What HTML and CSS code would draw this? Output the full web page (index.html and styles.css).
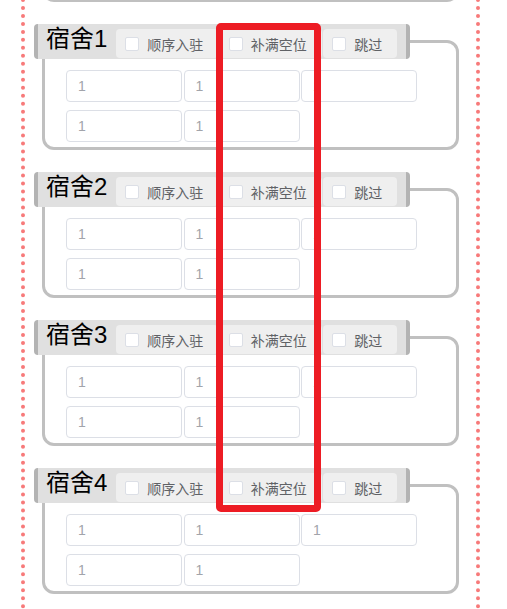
FILE: index.html
```html
<!DOCTYPE html>
<html lang="zh-CN">
<head>
<meta charset="utf-8">
<title>宿舍</title>
<link rel="stylesheet" href="styles.css">
</head>
<body>
<div class="page">
  <div class="prev-tail"></div>

  <fieldset class="room">
    <legend class="room-head">
      <div class="head-row">
        <span class="room-name">宿舍1</span>
        <label class="opt"><input type="checkbox" class="chk"><span>顺序入驻</span></label>
        <label class="opt"><input type="checkbox" class="chk"><span>补满空位</span></label>
        <label class="opt"><input type="checkbox" class="chk"><span>跳过</span></label>
      </div>
    </legend>
    <div class="cells">
      <input class="cell" type="text" value="1">
      <input class="cell" type="text" value="1">
      <input class="cell" type="text" value="1">
      <input class="cell" type="text" value="1">
      <input class="cell" type="text" value="1">
    </div>
  </fieldset>

  <fieldset class="room">
    <legend class="room-head">
      <div class="head-row">
        <span class="room-name">宿舍2</span>
        <label class="opt"><input type="checkbox" class="chk"><span>顺序入驻</span></label>
        <label class="opt"><input type="checkbox" class="chk"><span>补满空位</span></label>
        <label class="opt"><input type="checkbox" class="chk"><span>跳过</span></label>
      </div>
    </legend>
    <div class="cells">
      <input class="cell" type="text" value="1">
      <input class="cell" type="text" value="1">
      <input class="cell" type="text" value="1">
      <input class="cell" type="text" value="1">
      <input class="cell" type="text" value="1">
    </div>
  </fieldset>

  <fieldset class="room">
    <legend class="room-head">
      <div class="head-row">
        <span class="room-name">宿舍3</span>
        <label class="opt"><input type="checkbox" class="chk"><span>顺序入驻</span></label>
        <label class="opt"><input type="checkbox" class="chk"><span>补满空位</span></label>
        <label class="opt"><input type="checkbox" class="chk"><span>跳过</span></label>
      </div>
    </legend>
    <div class="cells">
      <input class="cell" type="text" value="1">
      <input class="cell" type="text" value="1">
      <input class="cell" type="text" value="1">
      <input class="cell" type="text" value="1">
      <input class="cell" type="text" value="1">
    </div>
  </fieldset>

  <fieldset class="room">
    <legend class="room-head">
      <div class="head-row">
        <span class="room-name">宿舍4</span>
        <label class="opt"><input type="checkbox" class="chk"><span>顺序入驻</span></label>
        <label class="opt"><input type="checkbox" class="chk"><span>补满空位</span></label>
        <label class="opt"><input type="checkbox" class="chk"><span>跳过</span></label>
      </div>
    </legend>
    <div class="cells">
      <input class="cell" type="text" value="1">
      <input class="cell" type="text" value="1">
      <input class="cell" type="text" value="1">
      <input class="cell" type="text" value="1">
      <input class="cell" type="text" value="1">
    </div>
  </fieldset>
</div>
<div class="mark"></div>
</body>
</html>
```

FILE: styles.css
```css
* {
  box-sizing: border-box;
}

html,
body {
  margin: 0;
  padding: 0;
  background: #fff;
  overflow: hidden;
}

body {
  font-family: "Liberation Sans", "Noto Sans CJK SC", sans-serif;
  position: relative;
  height: 609px;
}

.page {
  margin-left: 21px;
  width: 459px;
  height: 619px;
  padding: 0 17px;
  border-left: 4px dotted #f77a7a;
  border-right: 4px dotted #f77a7a;
}

.prev-tail {
  height: 12px;
  margin-top: -10px;
  margin-bottom: 22px;
  border: 3px solid #c0c0c0;
  border-top: 0;
  border-radius: 0 0 12px 12px;
}

.room {
  margin: 0 0 22px;
  padding: 0;
  border: 3px solid #c0c0c0;
  border-radius: 12px;
  min-width: 0;
}

.room:last-child {
  margin-bottom: 0;
}

.room-head {
  margin-left: -11px;
  padding: 5px 9px 1px 8px;
  background: #e0e0e0;
  border-left: 4px solid #b3b3b3;
  border-right: 4px solid #b3b3b3;
  border-radius: 4px;
}

.head-row {
  display: flex;
  align-items: center;
  height: 29px;
}

.room-name {
  align-self: flex-start;
  margin-top: -2px;
  margin-right: 9px;
  font-size: 24px;
  line-height: 24px;
  color: #000;
  white-space: nowrap;
}

.opt {
  display: flex;
  align-items: center;
  gap: 8px;
  height: 29px;
  padding: 0 15px 0 9px;
  background: #efefef;
  border-radius: 4px;
  font-size: 14px;
  color: #606266;
  white-space: nowrap;
}

.opt + .opt {
  margin-left: 1.5px;
}

.chk {
  appearance: none;
  -webkit-appearance: none;
  width: 14px;
  height: 14px;
  margin: 0;
  border: 1px solid #dcdfe6;
  border-radius: 2px;
  background: #fff;
  flex: none;
}

.cells {
  display: grid;
  grid-template-columns: repeat(3, 116px);
  column-gap: 1.5px;
  row-gap: 8px;
  padding: 11px 0 5px 21px;
}

.cell {
  width: 116px;
  height: 32px;
  margin: 0;
  padding: 0 11px;
  border: 1px solid #dcdfe6;
  border-radius: 4px;
  background: #fff;
  font-family: "Liberation Sans", "Noto Sans CJK SC", sans-serif;
  font-size: 14px;
  color: #a2a4aa;
  outline: none;
}

.mark {
  position: absolute;
  left: 216px;
  top: 23px;
  width: 105px;
  height: 489px;
  border: 7px solid #ed1c24;
  border-radius: 5px;
}
```
